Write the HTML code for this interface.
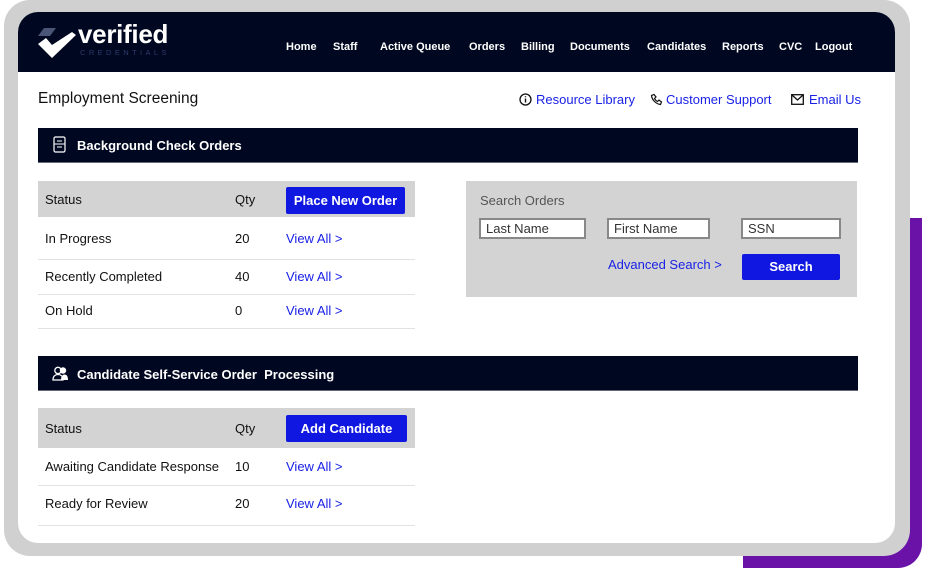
<!DOCTYPE html>
<html><head><style>
*{margin:0;padding:0;box-sizing:border-box}
body{width:928px;height:572px;background:#fff;position:relative;overflow:hidden;font-family:"Liberation Sans",sans-serif;font-size:13px;color:#111}
.a{position:absolute}
.purple{left:743px;top:218px;width:179px;height:350px;background:#6a12a8;clip-path:polygon(167px 0,179px 0,179px 350px,0 350px,0 330px,167px 14px);border-radius:0 0 24px 0}
.frame{left:4px;top:0;width:906px;height:556px;background:#d0d0d0;border-radius:26px}
.inner{left:18px;top:12px;width:877px;height:531px;background:#fff;border-radius:20px;overflow:hidden}
.hdr{left:0;top:0;width:877px;height:60px;background:#000720}
.nav{top:29px;color:#fff;font-weight:bold;font-size:11px}
.bar{background:#000720;color:#fff;font-weight:bold;font-size:13px;height:35px;left:20px;width:820px;border-bottom:1px solid #667}
.gray{background:#d3d3d3}
.btn{background:#0f17e0;color:#fff;font-weight:bold;border-radius:2px;text-align:center;font-size:13px}
.lnk{color:#1a22e6}
.line{height:1px;background:#e2e2e2;left:20px;width:377px}
.inp{background:#fff;border:2px solid #888;height:21px;font-size:13px;color:#333;padding-left:5px;line-height:17px}
</style></head><body>
<div class="a purple"></div>
<div class="a frame"></div>
<div class="a inner">
 <div class="a hdr"></div>
 <svg class="a" style="left:20px;top:14px" width="40" height="32" viewBox="0 0 40 32"><path d="M6 2h12l-6 8H0z" fill="#4a5578"/><path d="M0 18l8-6 6 7L34 6l4 3L14 32z" fill="#fff"/></svg>
 <div class="a" style="left:60px;top:7px;color:#fff;font-weight:bold;font-size:26px;letter-spacing:-0.3px">verified</div>
 <div class="a" style="left:62px;top:36px;color:#2e3a6a;font-size:7.5px;letter-spacing:3.4px">CREDENTIALS</div>
 <div class="a nav" style="left:268px">Home</div>
 <div class="a nav" style="left:315px">Staff</div>
 <div class="a nav" style="left:362px">Active Queue</div>
 <div class="a nav" style="left:451px">Orders</div>
 <div class="a nav" style="left:503px">Billing</div>
 <div class="a nav" style="left:552px">Documents</div>
 <div class="a nav" style="left:629px">Candidates</div>
 <div class="a nav" style="left:704px">Reports</div>
 <div class="a nav" style="left:761px">CVC</div>
 <div class="a nav" style="left:797px">Logout</div>

 <div class="a" style="left:20px;top:78px;font-size:15.5px">Employment Screening</div>
 <svg class="a" style="left:501px;top:81px" width="13" height="13" viewBox="0 0 13 13"><circle cx="6.5" cy="6.5" r="5.5" fill="none" stroke="#111" stroke-width="1.3"/><path d="M6.5 5.5v4M6.5 3.3v.9" stroke="#111" stroke-width="1.4"/></svg>
 <div class="a lnk" style="left:518px;top:80px">Resource Library</div>
 <svg class="a" style="left:632px;top:81px" width="13" height="13" viewBox="0 0 13 13"><path d="M4 1.5l2 2.5-1.5 1.5c.8 1.5 1.8 2.5 3 3L9 7l2.5 2-1 2.5C6 11 2 7 1.5 2.5z" fill="none" stroke="#111" stroke-width="1.2"/></svg>
 <div class="a lnk" style="left:648px;top:80px">Customer Support</div>
 <svg class="a" style="left:773px;top:82px" width="13" height="11" viewBox="0 0 13 11"><rect x="0.7" y="0.7" width="11.6" height="9.6" fill="none" stroke="#111" stroke-width="1.3"/><path d="M1 1l5.5 5L12 1" fill="none" stroke="#111" stroke-width="1.3"/></svg>
 <div class="a lnk" style="left:791px;top:80px">Email Us</div>

 <div class="a bar" style="top:116px"></div>
 <svg class="a" style="left:35px;top:124px" width="13" height="17" viewBox="0 0 13 17"><rect x="1" y="1" width="11" height="15" rx="1.5" fill="none" stroke="#fff" stroke-width="1.2"/><path d="M4 5h5M4 11h5M1 8h11" stroke="#fff" stroke-width="1"/></svg>
 <div class="a" style="left:59px;top:126px;color:#fff;font-weight:bold">Background Check Orders</div>

 <div class="a gray" style="left:20px;top:169px;width:377px;height:36px"></div>
 <div class="a" style="left:27px;top:180px">Status</div>
 <div class="a" style="left:217px;top:180px">Qty</div>
 <div class="a btn" style="left:268px;top:175px;width:119px;height:27px;line-height:27px">Place New Order</div>
 <div class="a" style="left:27px;top:219px">In Progress</div><div class="a" style="left:217px;top:219px">20</div><div class="a lnk" style="left:268px;top:219px">View All &gt;</div>
 <div class="a line" style="top:247px"></div>
 <div class="a" style="left:27px;top:257px">Recently Completed</div><div class="a" style="left:217px;top:257px">40</div><div class="a lnk" style="left:268px;top:257px">View All &gt;</div>
 <div class="a line" style="top:282px"></div>
 <div class="a" style="left:27px;top:291px">On Hold</div><div class="a" style="left:217px;top:291px">0</div><div class="a lnk" style="left:268px;top:291px">View All &gt;</div>
 <div class="a line" style="top:316px"></div>

 <div class="a gray" style="left:448px;top:169px;width:391px;height:116px"></div>
 <div class="a" style="left:462px;top:181px;color:#555">Search Orders</div>
 <div class="a inp" style="left:461px;top:206px;width:107px">Last Name</div>
 <div class="a inp" style="left:589px;top:206px;width:103px">First Name</div>
 <div class="a inp" style="left:723px;top:206px;width:100px">SSN</div>
 <div class="a lnk" style="left:590px;top:245px">Advanced Search &gt;</div>
 <div class="a btn" style="left:724px;top:242px;width:98px;height:26px;line-height:26px">Search</div>

 <div class="a bar" style="top:344px"></div>
 <svg class="a" style="left:34px;top:354px" width="17" height="15" viewBox="0 0 17 15"><circle cx="6" cy="4.5" r="3.2" fill="none" stroke="#fff" stroke-width="1.3"/><path d="M1 14c0-4 2.5-5.5 5-5.5s5 1.5 5 5.5z" fill="none" stroke="#fff" stroke-width="1.3"/><circle cx="11" cy="4.5" r="3.2" fill="#fff"/><path d="M9 14c0-3.5 1.5-5.5 3.5-5.5S16 10 16 14z" fill="#fff"/></svg>
 <div class="a" style="left:59px;top:355px;color:#fff;font-weight:bold">Candidate Self-Service Order&nbsp; Processing</div>

 <div class="a gray" style="left:20px;top:396px;width:377px;height:40px"></div>
 <div class="a" style="left:27px;top:409px">Status</div>
 <div class="a" style="left:217px;top:409px">Qty</div>
 <div class="a btn" style="left:268px;top:403px;width:121px;height:27px;line-height:27px">Add Candidate</div>
 <div class="a" style="left:27px;top:447px">Awaiting Candidate Response</div><div class="a" style="left:217px;top:447px">10</div><div class="a lnk" style="left:268px;top:447px">View All &gt;</div>
 <div class="a line" style="top:473px"></div>
 <div class="a" style="left:27px;top:484px">Ready for Review</div><div class="a" style="left:217px;top:484px">20</div><div class="a lnk" style="left:268px;top:484px">View All &gt;</div>
 <div class="a line" style="top:513px"></div>
</div>
</body></html>
